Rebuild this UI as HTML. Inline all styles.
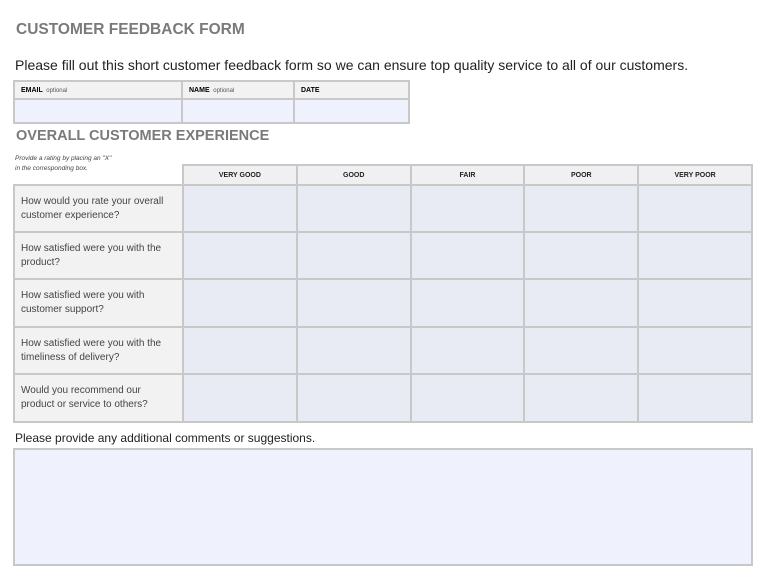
<!DOCTYPE html>
<html><head><style>
body{margin:0;width:768px;height:586px;background:#fff;font-family:"Liberation Sans",sans-serif;position:relative;overflow:hidden}
.a{position:absolute}
table{border-collapse:collapse;position:absolute;table-layout:fixed}
td{border:2px solid #c8c8c8;padding:0;vertical-align:middle}
.h{background:#f0f0f2;font-size:7px;font-weight:bold;color:#222;text-align:center}
.c{background:#e8ebf4}
.l{background:#f2f2f2;font-size:10px;color:#444;padding-left:6px;padding-right:10px;line-height:14px}
</style></head><body>
<div class="a" style="left:16px;top:21px;font-size:15.5px;font-weight:bold;color:#7a7a7a">CUSTOMER FEEDBACK FORM</div>
<div class="a" style="left:15px;top:57px;font-size:14px;color:#222">Please fill out this short customer feedback form so we can ensure top quality service to all of our customers.</div>
<table style="left:13px;top:80px;width:397px">
<tr style="height:18px"><td style="width:160px;background:#f2f2f2;font-size:7px;font-weight:bold;padding-left:6px">EMAIL <span style="font-weight:normal;font-size:6px;color:#555">&nbsp;optional</span></td><td style="width:104px;background:#f2f2f2;font-size:7px;font-weight:bold;padding-left:6px">NAME <span style="font-weight:normal;font-size:6px;color:#555">&nbsp;optional</span></td><td style="background:#f2f2f2;font-size:7px;font-weight:bold;padding-left:6px">DATE</td></tr>
<tr style="height:24px"><td style="background:#eff2fd"></td><td style="background:#eff2fd"></td><td style="background:#eff2fd"></td></tr>
</table>
<div class="a" style="left:16px;top:128px;font-size:14.5px;font-weight:bold;color:#7a7a7a">OVERALL CUSTOMER EXPERIENCE</div>
<table style="left:13px;top:164px;width:740px">
<tr style="height:20px"><td style="width:168px;border:none;border-bottom:2px solid #c8c8c8;background:transparent"></td><td class="h">VERY GOOD</td><td class="h">GOOD</td><td class="h">FAIR</td><td class="h">POOR</td><td class="h">VERY POOR</td></tr>
<tr style="height:47px"><td class="l">How would you rate your overall customer experience?</td><td class="c"></td><td class="c"></td><td class="c"></td><td class="c"></td><td class="c"></td></tr>
<tr style="height:47px"><td class="l">How satisfied were you with the product?</td><td class="c"></td><td class="c"></td><td class="c"></td><td class="c"></td><td class="c"></td></tr>
<tr style="height:48px"><td class="l">How satisfied were you with customer support?</td><td class="c"></td><td class="c"></td><td class="c"></td><td class="c"></td><td class="c"></td></tr>
<tr style="height:47px"><td class="l">How satisfied were you with the timeliness of delivery?</td><td class="c"></td><td class="c"></td><td class="c"></td><td class="c"></td><td class="c"></td></tr>
<tr style="height:48px"><td class="l">Would you recommend our product or service to others?</td><td class="c"></td><td class="c"></td><td class="c"></td><td class="c"></td><td class="c"></td></tr>
</table>
<div class="a" style="left:15px;top:154px;font-size:6.5px;font-style:italic;color:#444;line-height:10px">Provide a rating by placing an "X"<br>in the corresponding box.</div>
<div class="a" style="left:15px;top:431px;font-size:12px;color:#222">Please provide any additional comments or suggestions.</div>
<div class="a" style="left:13px;top:448px;width:736px;height:114px;background:#eff2fd;border:2px solid #c8c8c8"></div>
</body></html>
